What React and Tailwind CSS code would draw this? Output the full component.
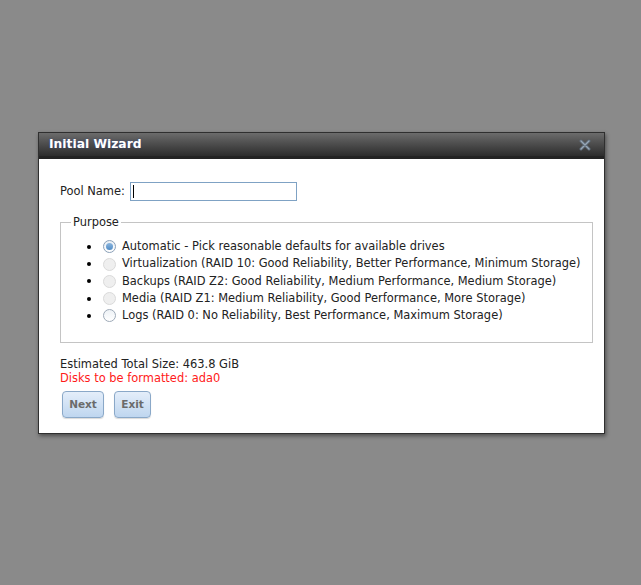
import React from 'react';

const purposes = [
  { label: 'Automatic - Pick reasonable defaults for available drives', state: 'checked' },
  { label: 'Virtualization (RAID 10: Good Reliability, Better Performance, Minimum Storage)', state: 'disabled' },
  { label: 'Backups (RAID Z2: Good Reliability, Medium Performance, Medium Storage)', state: 'disabled' },
  { label: 'Media (RAID Z1: Medium Reliability, Good Performance, More Storage)', state: 'disabled' },
  { label: 'Logs (RAID 0: No Reliability, Best Performance, Maximum Storage)', state: 'normal' },
];

function Radio({ state }) {
  if (state === 'checked') {
    return (
      <span className="flex h-[13px] w-[13px] items-center justify-center rounded-full border border-[#8aa0b8] bg-gradient-to-b from-[#e8eef5] to-[#ffffff]">
        <span className="h-[7px] w-[7px] rounded-full bg-gradient-to-b from-[#8cb6de] to-[#4f8cc6]" />
      </span>
    );
  }
  if (state === 'disabled') {
    return <span className="h-[13px] w-[13px] rounded-full border border-[#dadada] bg-[#efefef]" />;
  }
  return <span className="h-[13px] w-[13px] rounded-full border border-[#9eaab8] bg-gradient-to-b from-[#eef2f6] to-[#ffffff]" />;
}

function WizardButton({ children, width }) {
  return (
    <button className={`h-[27px] rounded-[4px] border border-[#8aa8c8] bg-gradient-to-b from-[#e4eefa] to-[#bfd6ef] text-[10.5px] font-bold text-[#6b6b6b] shadow-[0_1px_1px_rgba(0,0,0,0.15)] ${width}`}>
      {children}
    </button>
  );
}

export default function App() {
  return (
    <div className="min-h-[585px] bg-[#8a8a8a] pl-[38px] pt-[132px] font-['DejaVu_Sans',Verdana,sans-serif] text-[11.45px] text-[#222]">
      <div className="w-[567px] border border-[#2f2f2f] bg-white shadow-[1px_2px_4px_rgba(0,0,0,0.45)]">
        {/* Title bar */}
        <div className="flex h-[26px] items-center justify-between border-b-[3px] border-[#232323] bg-gradient-to-b from-[#6c6c6c] to-[#2d2d2d] pl-[10px] pr-[13px]">
          <span className="text-[12.3px] font-bold text-white [text-shadow:0_0_2px_#3a4a8a]">Initial Wizard</span>
          <svg width="12" height="12" viewBox="0 0 12 12">
            <path d="M2 2 L10 10 M10 2 L2 10" stroke="#5f6d7c" strokeWidth="3" strokeLinecap="round" />
            <path d="M2 2 L10 10 M10 2 L2 10" stroke="#97a6b5" strokeWidth="1.2" strokeLinecap="round" />
          </svg>
        </div>

        <div className="px-[21px] pb-[15px] pt-[23px]">
          {/* Pool name */}
          <div className="flex items-center gap-[5px]">
            <label>Pool Name:</label>
            <div className="flex h-[19px] w-[167px] items-center border border-[#7fa2c4] px-[2px]">
              <span className="h-[13px] w-px bg-black" />
            </div>
          </div>

          {/* Purpose */}
          <fieldset className="mt-[13px] w-[533px] border border-[#c4c4c4] px-[10px] pb-[18px] pt-[7px]">
            <legend className="px-[2px]">Purpose</legend>
            <ul className="flex flex-col">
              {purposes.map((p) => (
                <li key={p.label} className="flex h-[17.25px] items-center">
                  <span className="ml-[16px] mr-[12px] h-[4px] w-[4px] rounded-full bg-black" />
                  <Radio state={p.state} />
                  <span className="ml-[6px] whitespace-nowrap">{p.label}</span>
                </li>
              ))}
            </ul>
          </fieldset>

          {/* Summary */}
          <div className="mt-[14px] leading-[14px]">
            <p>Estimated Total Size: 463.8 GiB</p>
            <p className="text-[#ff1a1a]">Disks to be formatted: ada0</p>
          </div>

          <div className="mt-[6px] flex gap-[10px] pl-[2px]">
            <WizardButton width="w-[42px]">Next</WizardButton>
            <WizardButton width="w-[37px]">Exit</WizardButton>
          </div>
        </div>
      </div>
    </div>
  );
}
